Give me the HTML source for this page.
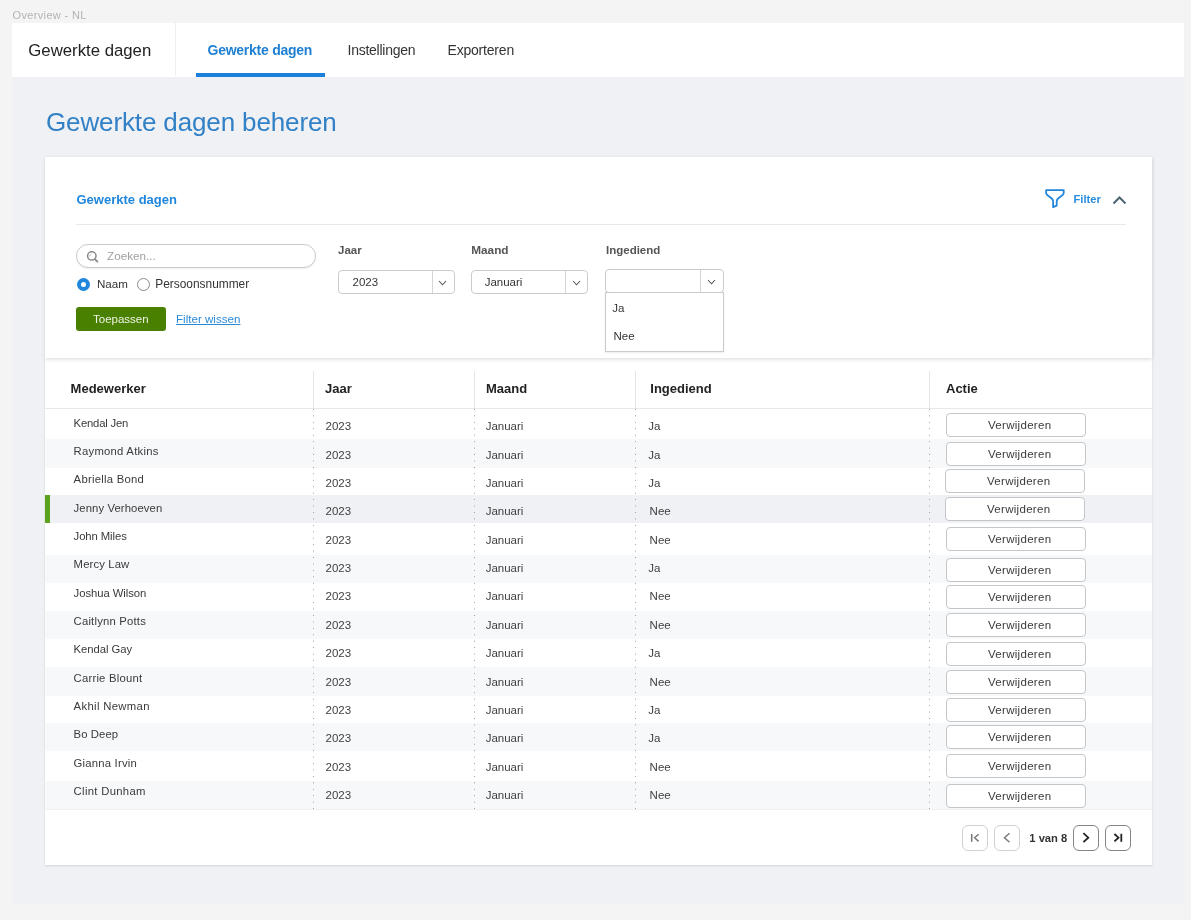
<!DOCTYPE html>
<html><head><meta charset="utf-8">
<style>
*{box-sizing:border-box;margin:0;padding:0}
html,body{width:1191px;height:920px;overflow:hidden}
body{-webkit-font-smoothing:antialiased;background:#f4f4f4;font-family:"Liberation Sans",sans-serif;position:relative;color:#333}
.a{position:absolute;white-space:nowrap;line-height:1}
#main{position:absolute;left:12px;top:23px;width:1172px;height:881px;background:#eff1f5}
#hdr{position:absolute;left:12px;top:23px;width:1172px;height:53.8px;background:#fff}
.card{position:absolute;background:#fff}
.sel{position:absolute;height:24px;border:1px solid #c9cccf;border-radius:4px;background:#fff}
.sel .sep{position:absolute;top:0;bottom:0;width:1px;background:#d3d6d9}
.chev{position:absolute}
.btn{position:absolute;left:946px;width:140px;height:24px;border:1px solid #c4c7ca;border-radius:4px;background:#fff}
.row{position:absolute;left:45px;width:1107px}
.pg{position:absolute;top:825px;width:25.5px;height:25.5px;border:1px solid #cfd1d3;border-radius:6px;background:#fff}
</style></head><body><div id="wrap" style="position:absolute;left:0;top:0;width:1191px;height:920px;will-change:transform">
<div class="a" id="ov" style="left:12.5px;top:10px;font-size:11px;color:#b3b3b3;letter-spacing:0.35px">Overview - NL</div>
<div id="main"></div>
<div id="hdr"></div>
<div style="position:absolute;left:175px;top:23px;width:1px;height:53px;background:#eeeeee"></div>
<div class="a" id="h1" style="left:28.3px;top:42.6px;font-size:16.75px;color:#222">Gewerkte dagen</div>
<div class="a" id="tab1" style="left:207.5px;top:43px;font-size:14px;font-weight:bold;color:#1f7fd2;letter-spacing:-0.25px">Gewerkte dagen</div>
<div style="position:absolute;left:195.5px;top:73.2px;width:129.5px;height:3.6px;background:#1a80dc"></div>
<div class="a" id="tab2" style="left:347.5px;top:43px;font-size:14px;color:#333;letter-spacing:-0.25px">Instellingen</div>
<div class="a" id="tab3" style="left:447.5px;top:43px;font-size:14px;color:#333;letter-spacing:-0.2px">Exporteren</div>
<div class="a" id="title" style="left:46px;top:109px;font-size:26px;color:#3281c6;letter-spacing:-0.13px">Gewerkte dagen beheren</div>

<!-- table card -->
<div class="card" id="tcard" style="left:45px;top:358px;width:1107px;height:507px;box-shadow:0 1px 2px rgba(0,0,0,0.12)"></div>
<!-- filter card -->
<div class="card" id="fcard" style="left:45px;top:157px;width:1107px;height:201px;box-shadow:0 2px 4px rgba(0,0,0,0.10),1px 0 3px rgba(0,0,0,0.05)"></div>

<div class="a" id="ct" style="left:76.5px;top:193px;font-size:13px;font-weight:bold;color:#1f86dc">Gewerkte dagen</div>
<svg style="position:absolute;left:1042px;top:186px" width="26" height="24" viewBox="0 0 26 24"><path d="M4.1 4H21.7V7C21.7 10.2 14.7 11.5 14.7 15V19.6L11.1 21.1V15C11.1 11.5 4.1 10.2 4.1 7Z" fill="none" stroke="#1f86dc" stroke-width="1.75" stroke-linejoin="round"/></svg>
<div class="a" id="filt" style="left:1073.5px;top:194px;font-size:11.2px;font-weight:bold;color:#2a8ee0">Filter</div>
<svg style="position:absolute;left:1112px;top:195px" width="15" height="10" viewBox="0 0 15 10"><path d="M1.5 8.5L7.5 2.5L13.5 8.5" fill="none" stroke="#4e6673" stroke-width="2"/></svg>
<div style="position:absolute;left:76px;top:224px;width:1050px;height:1px;background:#e6e8eb"></div>

<!-- search -->
<div style="position:absolute;left:76px;top:244px;width:240px;height:24px;border:1px solid #c8cacc;border-radius:12px;background:#fff;box-shadow:0 1px 1px rgba(0,0,0,0.06)"></div>
<svg style="position:absolute;left:86px;top:251px" width="14" height="13" viewBox="0 0 14 13"><circle cx="5.8" cy="4.9" r="4.2" fill="none" stroke="#8a8a8a" stroke-width="1.5"/><path d="M3.7 5.3Q3.8 3.7 5.3 3.2" fill="none" stroke="#b8b8b8" stroke-width="0.9"/><path d="M8.9 8.1L11.4 10.6" stroke="#8a8a8a" stroke-width="1.8" stroke-linecap="round"/></svg>
<div class="a" id="zk" style="left:107px;top:250px;font-size:11.7px;color:#a0a0a0">Zoeken...</div>

<!-- radios -->
<div style="position:absolute;left:77px;top:277.5px;width:13px;height:13px;border-radius:50%;border:4px solid #1f86dc;background:#fff"></div>
<div class="a" id="naam" style="left:97px;top:278px;font-size:11.6px;color:#333">Naam</div>
<div style="position:absolute;left:137px;top:277.5px;width:13px;height:13px;border-radius:50%;border:1px solid #8c8c8c;background:#fff"></div>
<div class="a" id="pers" style="left:155.3px;top:279px;font-size:11.9px;color:#333">Persoonsnummer</div>

<div style="position:absolute;left:76px;top:307px;width:90px;height:24px;border-radius:3px;background:#4a8000"></div>
<div class="a" id="toep" style="left:93px;top:314px;font-size:11.5px;color:#eef4e6">Toepassen</div>
<div class="a" id="fw" style="left:176px;top:313px;font-size:11.6px;color:#2b8ad8;text-decoration:underline">Filter wissen</div>

<!-- selects -->
<div class="a" id="lj" style="left:338px;top:245px;font-size:11.5px;font-weight:bold;color:#555">Jaar</div>
<div class="sel" style="left:338px;top:270px;width:117px"><div class="sep" style="left:93px"></div></div>
<div class="a" id="sj" style="left:352.5px;top:276.5px;font-size:11.5px;color:#333">2023</div>
<svg class="chev" style="left:438.3px;top:280.3px" width="9" height="6" viewBox="0 0 9 6"><path d="M1 1L4.5 4.8L8 1" fill="none" stroke="#555" stroke-width="1.1"/></svg>

<div class="a" id="lm" style="left:471.2px;top:245px;font-size:11.8px;font-weight:bold;color:#555">Maand</div>
<div class="sel" style="left:471px;top:270px;width:117px"><div class="sep" style="left:93px"></div></div>
<div class="a" id="sm" style="left:484.7px;top:276.5px;font-size:11.5px;color:#333">Januari</div>
<svg class="chev" style="left:572.3px;top:280.3px" width="9" height="6" viewBox="0 0 9 6"><path d="M1 1L4.5 4.8L8 1" fill="none" stroke="#555" stroke-width="1.1"/></svg>

<div class="a" id="li" style="left:606px;top:245px;font-size:11.5px;font-weight:bold;color:#555">Ingediend</div>
<div style="position:absolute;left:605px;top:292px;width:119px;height:60px;border:1px solid #c9cccf;background:#fff;box-shadow:0 1px 2px rgba(0,0,0,0.08)"></div>
<div class="sel" style="left:605px;top:269px;width:119px"><div class="sep" style="left:93.5px"></div></div>
<svg class="chev" style="left:706.5px;top:279.4px" width="9" height="6" viewBox="0 0 9 6"><path d="M1 1L4.5 4.8L8 1" fill="none" stroke="#555" stroke-width="1.1"/></svg>
<div class="a" id="dja" style="left:612.3px;top:302.5px;font-size:11.5px;color:#333">Ja</div>
<div class="a" id="dnee" style="left:613.5px;top:331px;font-size:11.5px;color:#333">Nee</div>

<div class="a" id="thm" style="left:70.6px;top:381.6px;font-size:13px;font-weight:bold;color:#222">Medewerker</div>
<div class="a" style="left:325px;top:381.6px;font-size:13px;font-weight:bold;color:#222">Jaar</div>
<div class="a" style="left:486px;top:381.6px;font-size:13px;font-weight:bold;color:#222">Maand</div>
<div class="a" style="left:650.3px;top:381.6px;font-size:13px;font-weight:bold;color:#222">Ingediend</div>
<div class="a" style="left:946px;top:381.6px;font-size:13px;font-weight:bold;color:#222">Actie</div>
<div style="position:absolute;left:313px;top:371px;width:1px;height:37px;background:#e3e5e8"></div>
<div style="position:absolute;left:474px;top:371px;width:1px;height:37px;background:#e3e5e8"></div>
<div style="position:absolute;left:635px;top:371px;width:1px;height:37px;background:#e3e5e8"></div>
<div style="position:absolute;left:929px;top:371px;width:1px;height:37px;background:#e3e5e8"></div>
<div style="position:absolute;left:45px;top:408px;width:1107px;height:1px;background:#e6e8eb"></div>
<div class="row" style="top:409px;height:30px;background:#ffffff"></div>
<div class="a" style="left:73.6px;top:417.73px;font-size:11.3px;letter-spacing:-0.2px;color:#3a3a3a">Kendal Jen</div>
<div class="a" style="left:325.5px;top:421.27px;font-size:11.5px;color:#404040">2023</div>
<div class="a" style="left:485.7px;top:421.27px;font-size:11.5px;color:#404040">Januari</div>
<div class="a" style="left:648.3px;top:421.27px;font-size:11.5px;color:#404040">Ja</div>
<div class="btn" style="left:946px;top:413px"></div>
<div class="a" style="left:988px;top:419.57px;font-size:11.5px;letter-spacing:0.3px;color:#3a3a3a">Verwijderen</div>
<div class="row" style="top:439px;height:29px;background:#f7f8fa"></div>
<div class="a" style="left:73.6px;top:446.05px;font-size:11.3px;letter-spacing:0.238px;color:#3a3a3a">Raymond Atkins</div>
<div class="a" style="left:325.5px;top:449.63px;font-size:11.5px;color:#404040">2023</div>
<div class="a" style="left:485.7px;top:449.63px;font-size:11.5px;color:#404040">Januari</div>
<div class="a" style="left:648.3px;top:449.63px;font-size:11.5px;color:#404040">Ja</div>
<div class="btn" style="left:946px;top:442px"></div>
<div class="a" style="left:988px;top:448.57px;font-size:11.5px;letter-spacing:0.3px;color:#3a3a3a">Verwijderen</div>
<div class="row" style="top:468px;height:27px;background:#ffffff"></div>
<div class="a" style="left:73.6px;top:474.37px;font-size:11.3px;letter-spacing:0.258px;color:#3a3a3a">Abriella Bond</div>
<div class="a" style="left:325.5px;top:477.99px;font-size:11.5px;color:#404040">2023</div>
<div class="a" style="left:485.7px;top:477.99px;font-size:11.5px;color:#404040">Januari</div>
<div class="a" style="left:648.3px;top:477.99px;font-size:11.5px;color:#404040">Ja</div>
<div class="btn" style="left:945px;top:469px"></div>
<div class="a" style="left:987px;top:475.57px;font-size:11.5px;letter-spacing:0.3px;color:#3a3a3a">Verwijderen</div>
<div class="row" style="top:495px;height:28px;background:#eff1f5"></div>
<div style="position:absolute;left:45px;top:495px;width:5px;height:28px;background:#5da21c"></div>
<div class="a" style="left:73.6px;top:502.69px;font-size:11.3px;letter-spacing:0.093px;color:#3a3a3a">Jenny Verhoeven</div>
<div class="a" style="left:325.5px;top:506.35px;font-size:11.5px;color:#404040">2023</div>
<div class="a" style="left:485.7px;top:506.35px;font-size:11.5px;color:#404040">Januari</div>
<div class="a" style="left:649.6px;top:506.35px;font-size:11.5px;color:#404040">Nee</div>
<div class="btn" style="left:945px;top:497px"></div>
<div class="a" style="left:987px;top:503.57px;font-size:11.5px;letter-spacing:0.3px;color:#3a3a3a">Verwijderen</div>
<div class="row" style="top:523px;height:32px;background:#ffffff"></div>
<div class="a" style="left:73.6px;top:531.01px;font-size:11.3px;letter-spacing:-0.089px;color:#3a3a3a">John Miles</div>
<div class="a" style="left:325.5px;top:534.71px;font-size:11.5px;color:#404040">2023</div>
<div class="a" style="left:485.7px;top:534.71px;font-size:11.5px;color:#404040">Januari</div>
<div class="a" style="left:649.6px;top:534.71px;font-size:11.5px;color:#404040">Nee</div>
<div class="btn" style="left:946px;top:527px"></div>
<div class="a" style="left:988px;top:533.57px;font-size:11.5px;letter-spacing:0.3px;color:#3a3a3a">Verwijderen</div>
<div class="row" style="top:555px;height:28px;background:#f7f8fa"></div>
<div class="a" style="left:73.6px;top:559.33px;font-size:11.3px;letter-spacing:0.125px;color:#3a3a3a">Mercy Law</div>
<div class="a" style="left:325.5px;top:563.07px;font-size:11.5px;color:#404040">2023</div>
<div class="a" style="left:485.7px;top:563.07px;font-size:11.5px;color:#404040">Januari</div>
<div class="a" style="left:648.3px;top:563.07px;font-size:11.5px;color:#404040">Ja</div>
<div class="btn" style="left:946px;top:558px"></div>
<div class="a" style="left:988px;top:564.57px;font-size:11.5px;letter-spacing:0.3px;color:#3a3a3a">Verwijderen</div>
<div class="row" style="top:583px;height:28px;background:#ffffff"></div>
<div class="a" style="left:73.6px;top:587.65px;font-size:11.3px;letter-spacing:-0.058px;color:#3a3a3a">Joshua Wilson</div>
<div class="a" style="left:325.5px;top:591.43px;font-size:11.5px;color:#404040">2023</div>
<div class="a" style="left:485.7px;top:591.43px;font-size:11.5px;color:#404040">Januari</div>
<div class="a" style="left:649.6px;top:591.43px;font-size:11.5px;color:#404040">Nee</div>
<div class="btn" style="left:946px;top:585px"></div>
<div class="a" style="left:988px;top:591.57px;font-size:11.5px;letter-spacing:0.3px;color:#3a3a3a">Verwijderen</div>
<div class="row" style="top:611px;height:28px;background:#f7f8fa"></div>
<div class="a" style="left:73.6px;top:615.97px;font-size:11.3px;letter-spacing:0.192px;color:#3a3a3a">Caitlynn Potts</div>
<div class="a" style="left:325.5px;top:619.79px;font-size:11.5px;color:#404040">2023</div>
<div class="a" style="left:485.7px;top:619.79px;font-size:11.5px;color:#404040">Januari</div>
<div class="a" style="left:649.6px;top:619.79px;font-size:11.5px;color:#404040">Nee</div>
<div class="btn" style="left:946px;top:613px"></div>
<div class="a" style="left:988px;top:619.57px;font-size:11.5px;letter-spacing:0.3px;color:#3a3a3a">Verwijderen</div>
<div class="row" style="top:639px;height:28px;background:#ffffff"></div>
<div class="a" style="left:73.6px;top:644.29px;font-size:11.3px;letter-spacing:-0.067px;color:#3a3a3a">Kendal Gay</div>
<div class="a" style="left:325.5px;top:648.15px;font-size:11.5px;color:#404040">2023</div>
<div class="a" style="left:485.7px;top:648.15px;font-size:11.5px;color:#404040">Januari</div>
<div class="a" style="left:648.3px;top:648.15px;font-size:11.5px;color:#404040">Ja</div>
<div class="btn" style="left:946px;top:642px"></div>
<div class="a" style="left:988px;top:648.57px;font-size:11.5px;letter-spacing:0.3px;color:#3a3a3a">Verwijderen</div>
<div class="row" style="top:667px;height:29px;background:#f7f8fa"></div>
<div class="a" style="left:73.6px;top:672.61px;font-size:11.3px;letter-spacing:0.208px;color:#3a3a3a">Carrie Blount</div>
<div class="a" style="left:325.5px;top:676.51px;font-size:11.5px;color:#404040">2023</div>
<div class="a" style="left:485.7px;top:676.51px;font-size:11.5px;color:#404040">Januari</div>
<div class="a" style="left:649.6px;top:676.51px;font-size:11.5px;color:#404040">Nee</div>
<div class="btn" style="left:946px;top:670px"></div>
<div class="a" style="left:988px;top:676.57px;font-size:11.5px;letter-spacing:0.3px;color:#3a3a3a">Verwijderen</div>
<div class="row" style="top:696px;height:27px;background:#ffffff"></div>
<div class="a" style="left:73.6px;top:700.93px;font-size:11.3px;letter-spacing:0.336px;color:#3a3a3a">Akhil Newman</div>
<div class="a" style="left:325.5px;top:704.87px;font-size:11.5px;color:#404040">2023</div>
<div class="a" style="left:485.7px;top:704.87px;font-size:11.5px;color:#404040">Januari</div>
<div class="a" style="left:648.3px;top:704.87px;font-size:11.5px;color:#404040">Ja</div>
<div class="btn" style="left:946px;top:698px"></div>
<div class="a" style="left:988px;top:704.57px;font-size:11.5px;letter-spacing:0.3px;color:#3a3a3a">Verwijderen</div>
<div class="row" style="top:723px;height:28px;background:#f7f8fa"></div>
<div class="a" style="left:73.6px;top:729.25px;font-size:11.3px;letter-spacing:0.1px;color:#3a3a3a">Bo Deep</div>
<div class="a" style="left:325.5px;top:733.23px;font-size:11.5px;color:#404040">2023</div>
<div class="a" style="left:485.7px;top:733.23px;font-size:11.5px;color:#404040">Januari</div>
<div class="a" style="left:648.3px;top:733.23px;font-size:11.5px;color:#404040">Ja</div>
<div class="btn" style="left:946px;top:725px"></div>
<div class="a" style="left:988px;top:731.57px;font-size:11.5px;letter-spacing:0.3px;color:#3a3a3a">Verwijderen</div>
<div class="row" style="top:751px;height:30px;background:#ffffff"></div>
<div class="a" style="left:73.6px;top:757.57px;font-size:11.3px;letter-spacing:0.209px;color:#3a3a3a">Gianna Irvin</div>
<div class="a" style="left:325.5px;top:761.59px;font-size:11.5px;color:#404040">2023</div>
<div class="a" style="left:485.7px;top:761.59px;font-size:11.5px;color:#404040">Januari</div>
<div class="a" style="left:649.6px;top:761.59px;font-size:11.5px;color:#404040">Nee</div>
<div class="btn" style="left:946px;top:754px"></div>
<div class="a" style="left:988px;top:760.57px;font-size:11.5px;letter-spacing:0.3px;color:#3a3a3a">Verwijderen</div>
<div class="row" style="top:781px;height:28px;background:#f7f8fa"></div>
<div class="a" style="left:73.6px;top:785.89px;font-size:11.3px;letter-spacing:0.309px;color:#3a3a3a">Clint Dunham</div>
<div class="a" style="left:325.5px;top:789.95px;font-size:11.5px;color:#404040">2023</div>
<div class="a" style="left:485.7px;top:789.95px;font-size:11.5px;color:#404040">Januari</div>
<div class="a" style="left:649.6px;top:789.95px;font-size:11.5px;color:#404040">Nee</div>
<div class="btn" style="left:946px;top:784px"></div>
<div class="a" style="left:988px;top:790.57px;font-size:11.5px;letter-spacing:0.3px;color:#3a3a3a">Verwijderen</div>
<div style="position:absolute;left:313px;top:409px;width:1px;height:400px;background-image:linear-gradient(#9a9a9a 1px,transparent 1px);background-size:1px 6.45px"></div>
<div style="position:absolute;left:474px;top:409px;width:1px;height:400px;background-image:linear-gradient(#9a9a9a 1px,transparent 1px);background-size:1px 6.45px"></div>
<div style="position:absolute;left:635px;top:409px;width:1px;height:400px;background-image:linear-gradient(#9a9a9a 1px,transparent 1px);background-size:1px 6.45px"></div>
<div style="position:absolute;left:929px;top:409px;width:1px;height:400px;background-image:linear-gradient(#9a9a9a 1px,transparent 1px);background-size:1px 6.45px"></div>
<div style="position:absolute;left:45px;top:809px;width:1107px;height:1px;background:#eef0f2"></div>
<div class="pg" style="left:962px"></div>
<div class="pg" style="left:994.3px"></div>
<div class="a" id="pgt" style="left:1029.3px;top:832.5px;font-size:11.2px;font-weight:bold;color:#333">1 van 8</div>
<div class="pg" style="left:1073px;border-color:#858585"></div>
<div class="pg" style="left:1105.3px;border-color:#858585"></div>
<svg style="position:absolute;left:955px;top:820px" width="185" height="35" viewBox="0 0 185 35"><path d="M16.70 14.00V21.80" fill="none" stroke="#7a7a7a" stroke-width="1.6"/><path d="M23.60 14.20L19.60 17.80L23.60 21.40" fill="none" stroke="#7a7a7a" stroke-width="1.5"/><path d="M54.50 13.20L49.50 17.70L54.50 22.20" fill="none" stroke="#7a7a7a" stroke-width="1.5"/><path d="M128.40 13.20L133.30 17.70L128.40 22.20" fill="none" stroke="#222" stroke-width="1.8"/><path d="M159.40 14.00L163.50 17.70L159.40 21.40" fill="none" stroke="#222" stroke-width="1.8"/><path d="M166.30 13.80V21.80" fill="none" stroke="#222" stroke-width="1.8"/></svg>
</div></body></html>
